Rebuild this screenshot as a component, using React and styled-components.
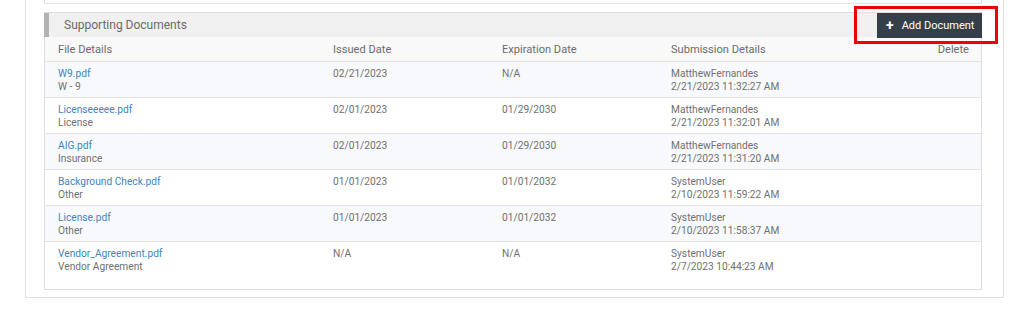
import styled, { createGlobalStyle } from "styled-components";

const GlobalStyle = createGlobalStyle`
  body {
    margin: 0;
    background: #fff;
    font-family: Roboto, "Liberation Sans", Arial, sans-serif;
  }
`;

const documents = [
  { file: "W9.pdf", type: "W - 9", issued: "02/21/2023", expires: "N/A", user: "MatthewFernandes", at: "2/21/2023 11:32:27 AM" },
  { file: "Licenseeeee.pdf", type: "License", issued: "02/01/2023", expires: "01/29/2030", user: "MatthewFernandes", at: "2/21/2023 11:32:01 AM" },
  { file: "AIG.pdf", type: "Insurance", issued: "02/01/2023", expires: "01/29/2030", user: "MatthewFernandes", at: "2/21/2023 11:31:20 AM" },
  { file: "Background Check.pdf", type: "Other", issued: "01/01/2023", expires: "01/01/2032", user: "SystemUser", at: "2/10/2023 11:59:22 AM" },
  { file: "License.pdf", type: "Other", issued: "01/01/2023", expires: "01/01/2032", user: "SystemUser", at: "2/10/2023 11:58:37 AM" },
  { file: "Vendor_Agreement.pdf", type: "Vendor Agreement", issued: "N/A", expires: "N/A", user: "SystemUser", at: "2/7/2023 10:44:23 AM" },
];

const App = () => {
  return (
    <>
      <GlobalStyle />
      <Page>
        <Card>
          <PrevPanel />
          <Panel>
            <TitleBar>
              <Title>Supporting Documents</Title>
              <AddButton>
                <span className="plus">+</span>
                Add Document
              </AddButton>
              <Highlight />
            </TitleBar>
            <HeadRow>
              <div>File Details</div>
              <div>Issued Date</div>
              <div>Expiration Date</div>
              <div>Submission Details</div>
              <div className="right">Delete</div>
            </HeadRow>
            {documents.map((doc, i) => (
              <Row key={doc.file} $shaded={i % 2 === 0} $last={i === documents.length - 1}>
                <div>
                  <FileLink>{doc.file}</FileLink>
                  <div>{doc.type}</div>
                </div>
                <div>{doc.issued}</div>
                <div>{doc.expires}</div>
                <div>
                  <div>{doc.user}</div>
                  <div>{doc.at}</div>
                </div>
                <div />
              </Row>
            ))}
          </Panel>
        </Card>
      </Page>
    </>
  );
};

const Page = styled.div`
  padding-left: 25px;
`;

const Card = styled.div`
  width: 979px;
  box-sizing: border-box;
  border: 1px solid #e2e2e2;
  border-top: none;
  padding: 0 21px 7px 18px;
`;

const PrevPanel = styled.div`
  height: 3px;
  border: 1px solid #e2e2e2;
  border-top: none;
  margin-bottom: 8px;
`;

const Panel = styled.div`
  border: 1px solid #dedede;
`;

const TitleBar = styled.div`
  position: relative;
  display: flex;
  align-items: center;
  justify-content: space-between;
  height: 24px;
  background: #f0f0f0;
  border-left: 5px solid #b3b3b3;
  margin-left: -1px;
`;

const Title = styled.div`
  padding-left: 15px;
  font-size: 12px;
  color: #6b6b6b;
`;

const AddButton = styled.button`
  display: flex;
  align-items: center;
  white-space: nowrap;
  height: 25px;
  width: 105px;
  margin: 0 -1px 0 0;
  padding: 0 0 0 9px;
  border: none;
  background: #343f4a;
  color: #fff;
  font-family: inherit;
  font-size: 11px;
  cursor: pointer;

  .plus {
    font-size: 14px;
    font-weight: 700;
    margin-right: 8px;
    line-height: 1;
  }
`;

const Highlight = styled.div`
  position: absolute;
  top: -7px;
  right: -17px;
  width: 144px;
  height: 38px;
  box-sizing: border-box;
  border: 3px solid #f00000;
  pointer-events: none;
`;

const Grid = styled.div`
  display: grid;
  grid-template-columns: 275px 169px 169px 1fr 80px;

  > div {
    padding-left: 13px;
  }

  > div.right {
    text-align: right;
    padding: 0 12px 0 0;
  }
`;

const HeadRow = styled(Grid)`
  height: 24px;
  align-items: center;
  background: #f9f9f9;
  border-bottom: 1px solid #e3e3e3;
  font-size: 11.1px;
  color: #6b6b6b;
`;

const Row = styled(Grid)`
  background: ${({ $shaded }) => ($shaded ? "#f8f9fc" : "#fff")};
  border-bottom: ${({ $last }) => ($last ? "none" : "1px solid #e3e3e3")};
  padding: 5px 0 ${({ $last }) => ($last ? "16px" : "4px")};
  font-size: 10.2px;
  line-height: 13px;
  color: #707070;
`;

const FileLink = styled.a`
  display: block;
  color: #4084c3;
  text-decoration: none;
  cursor: pointer;
`;

export default App;
